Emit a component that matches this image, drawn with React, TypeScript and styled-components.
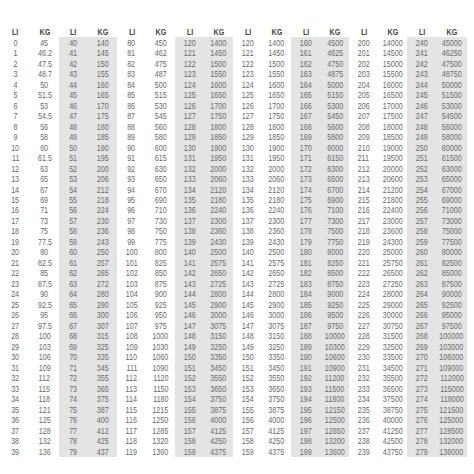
import React from 'react';
import styled, {createGlobalStyle} from 'styled-components';

const GlobalStyle = createGlobalStyle`
  html, body {
    margin: 0;
    padding: 0;
    background: #ffffff;
  }
`;

const kgA = ['45', '46.2', '47.5', '48.7', '50', '51.5', '53', '54.5', '56', '58', '60', '61.5', '63', '65', '67', '69', '71', '73', '75', '77.5',
  '80', '82.5', '85', '87.5', '90', '92.5', '95', '97.5', '100', '103', '106', '109', '112', '115', '118', '121', '125', '128', '132', '136'];
const kgB = [140, 145, 150, 155, 160, 165, 170, 175, 180, 185, 190, 195, 200, 206, 212, 218, 224, 230, 236, 243,
  250, 257, 265, 272, 280, 290, 300, 307, 315, 325, 335, 345, 355, 365, 375, 387, 400, 412, 425, 437];
const kgC = [450, 462, 475, 487, 500, 515, 530, 545, 560, 580, 600, 615, 630, 650, 670, 690, 710, 730, 750, 775,
  800, 825, 850, 875, 900, 925, 950, 975, 1000, 1030, 1060, 1090, 1120, 1150, 1180, 1215, 1250, 1285, 1320, 1360];
const kgD = [1400, 1450, 1500, 1550, 1600, 1650, 1700, 1750, 1800, 1850, 1900, 1950, 2000, 2060, 2120, 2180, 2240, 2300, 2360, 2430,
  2500, 2575, 2650, 2725, 2800, 2900, 3000, 3075, 3150, 3250, 3350, 3450, 3550, 3650, 3750, 3875, 4000, 4125, 4250, 4375];
const kgE = [4500, 4625, 4750, 4875, 5000, 5150, 5300, 5450, 5600, 5800, 6000, 6150, 6300, 6500, 6700, 6900, 7100, 7300, 7500, 7750,
  8000, 8250, 8500, 8750, 9000, 9250, 9500, 9750, 10000, 10300, 10600, 10900, 11200, 11500, 11800, 12150, 12500, 12850, 13200, 13600];
const kgF = [14000, 14500, 15000, 15500, 16000, 16500, 17000, 17500, 18000, 18500, 19000, 19500, 20000, 20600, 21200, 21800, 22400, 23000, 23600, 24300,
  25000, 25750, 26500, 27250, 28000, 29000, 30000, 30750, 31500, 32500, 33500, 34500, 35500, 36500, 37500, 38750, 40000, 41250, 42500, 43750];
const kgG = [45000, 46250, 47500, 48750, 50000, 51500, 53000, 54500, 56000, 58000, 60000, 61500, 63000, 65000, 67000, 69000, 71000, 73000, 75000, 77500,
  80000, 82500, 85000, 87500, 90000, 92500, 95000, 97500, 100000, 103000, 106000, 109000, 112000, 115000, 118000, 121500, 125000, 128500, 132000, 136000];

// each block: first LI value, kg list, shaded background
const blocks: {start: number; kg: (string | number)[]; shaded: boolean}[] = [
  {start: 0, kg: kgA, shaded: false},
  {start: 40, kg: kgB, shaded: true},
  {start: 80, kg: kgC, shaded: false},
  {start: 120, kg: kgD, shaded: true},
  {start: 120, kg: kgD, shaded: false},
  {start: 160, kg: kgE, shaded: true},
  {start: 200, kg: kgF, shaded: false},
  {start: 240, kg: kgG, shaded: true},
];

const Page = styled.div`
  padding: 27px 0 0 1px;
`;

const Table = styled.div`
  display: grid;
  width: 466px;
  grid-template-columns: repeat(16, 1fr);
  grid-auto-rows: 10.49px;
  font-family: "Liberation Sans", Arial, sans-serif;
  font-size: 9.2px;
`;

const HeadCell = styled.div`
  display: flex;
  align-items: center;
  justify-content: center;
  font-weight: bold;
  color: #454545;
`;

const Cell = styled.div<{$shaded: boolean}>`
  display: flex;
  align-items: center;
  justify-content: center;
  color: #6a6a6a;
  background: ${p => p.$shaded ? '#e4e4e4' : 'transparent'};
  white-space: nowrap;
`;

// the source table uses a narrow face; squeeze the text horizontally
const Narrow = styled.span`
  display: inline-block;
  transform: scaleX(0.78);
`;

export default function App() {
  const rows = Array.from({length: 40}, (_, i) => i);
  return (
    <Page>
      <GlobalStyle/>
      <Table>
        {blocks.map((b, k) => (
          <React.Fragment key={`h${k}`}>
            <HeadCell><Narrow>LI</Narrow></HeadCell>
            <HeadCell><Narrow>KG</Narrow></HeadCell>
          </React.Fragment>
        ))}
        {rows.map(i => blocks.map((b, k) => (
          <React.Fragment key={`${i}-${k}`}>
            <Cell $shaded={b.shaded}><Narrow>{b.start + i}</Narrow></Cell>
            <Cell $shaded={b.shaded}><Narrow>{b.kg[i]}</Narrow></Cell>
          </React.Fragment>
        )))}
      </Table>
    </Page>
  );
}
